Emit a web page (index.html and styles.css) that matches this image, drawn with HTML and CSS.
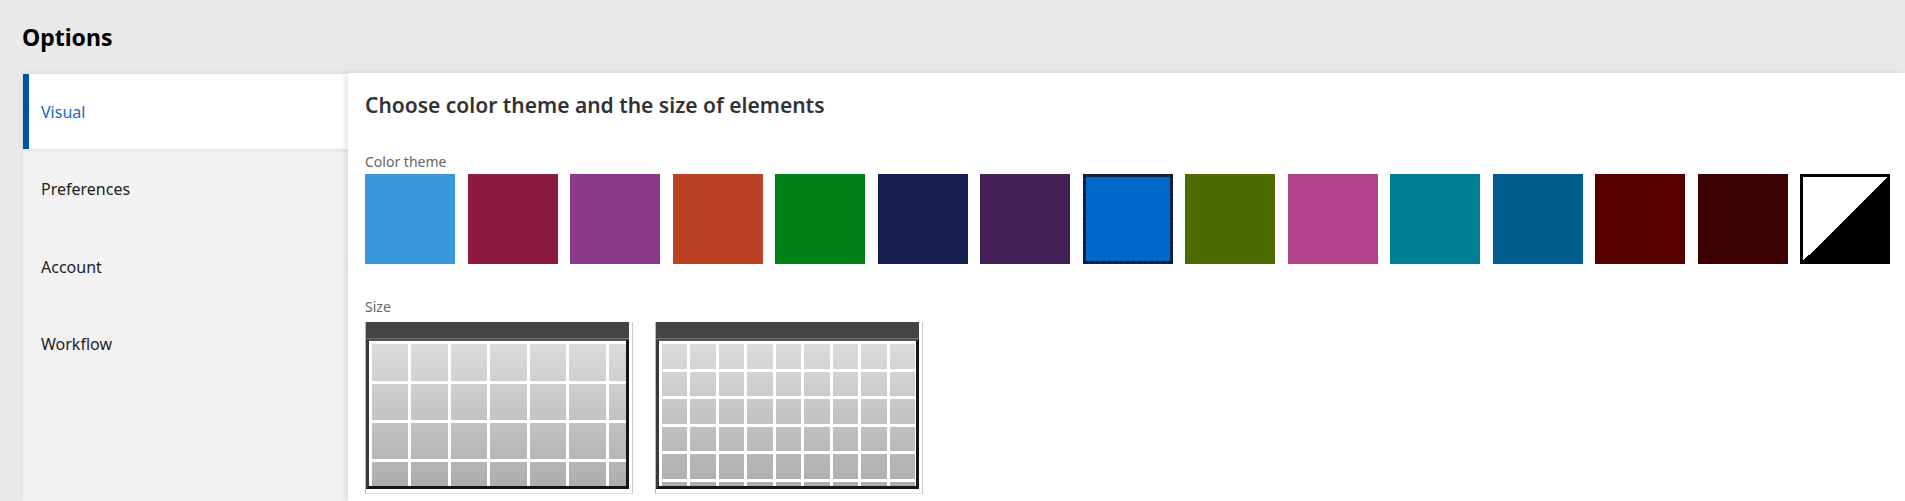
FILE: index.html
```html
<!DOCTYPE html>
<html lang="en">
<head>
<meta charset="utf-8">
<title>Options</title>
<link rel="stylesheet" href="styles.css">
</head>
<body>
<header class="top">
  <h1 class="title">Options</h1>
</header>
<div class="layout">
  <nav class="sidebar">
    <div class="nav-item active">Visual</div>
    <div class="nav-item">Preferences</div>
    <div class="nav-item">Account</div>
    <div class="nav-item">Workflow</div>
  </nav>
  <main class="panel">
    <h2 class="heading">Choose color theme and the size of elements</h2>
    <div class="label">Color theme</div>
    <div class="swatches">
      <div class="swatch c1"></div>
      <div class="swatch c2"></div>
      <div class="swatch c3"></div>
      <div class="swatch c4"></div>
      <div class="swatch c5"></div>
      <div class="swatch c6"></div>
      <div class="swatch c7"></div>
      <div class="swatch c8 selected"></div>
      <div class="swatch c9"></div>
      <div class="swatch c10"></div>
      <div class="swatch c11"></div>
      <div class="swatch c12"></div>
      <div class="swatch c13"></div>
      <div class="swatch c14"></div>
      <div class="swatch contrast"></div>
    </div>
    <div class="label size-label">Size</div>
    <div class="sizes">
      <div class="thumb">
        <div class="screen">
          <div class="bar"></div>
          <div class="grid large"></div>
        </div>
      </div>
      <div class="thumb">
        <div class="screen">
          <div class="bar"></div>
          <div class="grid small"></div>
        </div>
      </div>
    </div>
  </main>
</div>
</body>
</html>
```

FILE: styles.css
```css
html, body {
  margin: 0;
  padding: 0;
}
body {
  background: #e9e9e9;
  font-family: "Noto Sans", "Open Sans", sans-serif;
  color: #222;
  height: 501px;
  overflow: hidden;
}
.top {
  height: 73px;
  padding-left: 22px;
  box-sizing: border-box;
}
.title {
  margin: 0;
  padding-top: 21px;
  font-size: 23px;
  line-height: 32px;
  font-weight: 700;
  color: #000;
}
.layout {
  display: flex;
  height: 428px;
}
.sidebar {
  width: 325px;
  margin-left: 23px;
  margin-top: 1px;
  background: #f2f2f2;
  box-shadow: 0 -2px 5px rgba(0, 0, 0, 0.05);
}
.nav-item {
  height: 77px;
  display: flex;
  align-items: center;
  padding-left: 18px;
  font-size: 16px;
  color: #222;
  box-sizing: border-box;
}
.nav-item.active {
  background: #fff;
  border-left: 6px solid #0053a3;
  padding-left: 12px;
  color: #1766c7;
  height: 75px;
  box-shadow: 0 2px 4px rgba(0, 0, 0, 0.06);
  position: relative;
}
.nav-item.active + .nav-item {
  height: 79px;
}
.panel {
  flex: 1;
  background: #fff;
  padding: 17px 15px 0 17px;
  box-shadow: -3px 0 6px rgba(0, 0, 0, 0.1);
  position: relative;
}
.heading {
  margin: 0;
  font-size: 21px;
  line-height: 30px;
  font-weight: 600;
  color: #333;
}
.label {
  margin-top: 32px;
  font-size: 14px;
  line-height: 19px;
  color: #666;
}
.swatches {
  margin-top: 3px;
  display: flex;
  justify-content: space-between;
}
.swatch {
  width: 90px;
  height: 90px;
  box-sizing: border-box;
}
.c1 { background: #3a96dd; }
.c2 { background: #8e1942; }
.c3 { background: #8b398b; }
.c4 { background: #bb4024; }
.c5 { background: #008118; }
.c6 { background: #161f4d; }
.c7 { background: #442059; }
.c8 { background: #0069cc; }
.c9 { background: #4b6a00; }
.c10 { background: #b4418b; }
.c11 { background: #008196; }
.c12 { background: #005e8f; }
.c13 { background: #580000; }
.c14 { background: #3b0000; }
.selected {
  border: 3px dotted #0c2a4a;
  outline: 3px solid rgba(20, 28, 40, 0.85);
  outline-offset: -3px;
}
.contrast {
  border: 3px solid #000;
  background: linear-gradient(to bottom right, #fff 50%, #000 50%);
}
.size-label {
  margin-top: 33px;
}
.sizes {
  margin-top: 6px;
  display: flex;
  gap: 22px;
}
.thumb {
  width: 268px;
  height: 172px;
  box-sizing: border-box;
  border-left: 1px solid #b8b8b8;
  border-right: 1px solid #c8c8c8;
  border-bottom: 1px solid #e4e4e4;
  padding-right: 3px;
}
.screen {
  display: flex;
  flex-direction: column;
  height: 167px;
}
.bar {
  height: 16px;
  background: #444;
  border-bottom: 1px solid #6a6a6a;
}
.grid {
  flex: 1;
  border: 3px solid #151515;
  border-top: 2px solid #555;
  border-left-color: #3a3a3a;
  background-color: #fff;
}
.grid.large {
  background-image:
    repeating-linear-gradient(90deg, #fff 0 3px, transparent 3px 39.5px),
    repeating-linear-gradient(180deg, #fff 0 3px, transparent 3px 39.5px),
    linear-gradient(#dddddd, #adadad);
}
.grid.small {
  background-image:
    repeating-linear-gradient(90deg, #fff 0 3px, transparent 3px 28.5px),
    repeating-linear-gradient(180deg, #fff 0 3px, transparent 3px 27.5px),
    linear-gradient(#dddddd, #adadad);
}
```
